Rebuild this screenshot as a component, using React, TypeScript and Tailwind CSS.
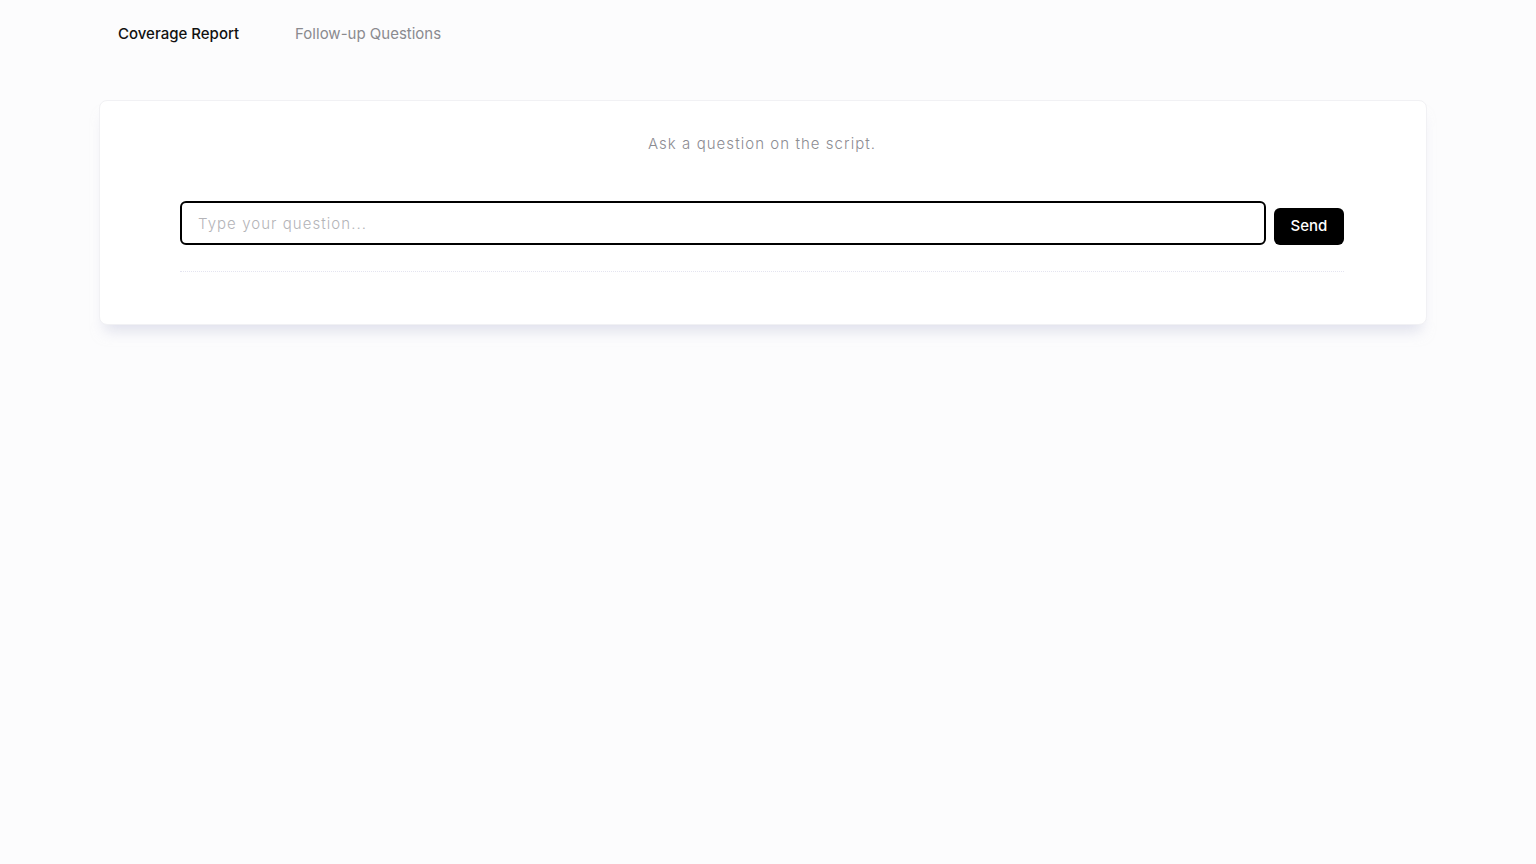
export default function App() {
  return (
    <div
      className="min-h-screen w-full bg-[#fcfcfd] text-black"
      style={{ fontFamily: 'Inter, "Noto Sans", sans-serif' }}
    >
      {/* Tabs */}
      <div className="flex items-center pl-[90px] pt-[23px]">
        <button className="px-7 text-[15px] font-medium text-[#111]">Coverage Report</button>
        <button className="px-7 text-[15px] font-normal text-[#8a8a8f]">Follow-up Questions</button>
      </div>

      {/* Card */}
      <div className="mx-auto mt-[54px] w-[1328px] -translate-x-[5px] rounded-lg border border-[#f1f1f4] bg-white pt-[32px] pr-[82px] pb-[52px] pl-20 shadow-[0_12px_14px_-6px_rgba(200,202,222,0.55)]">
        <p className="text-center text-[15px] font-light tracking-[0.07em] text-[#8c8c92]">
          Ask a question on the script.
        </p>

        <div className="mt-[46px] flex items-end gap-2">
          <input
            type="text"
            placeholder="Type your question..."
            className="h-[44px] flex-1 rounded-md border-2 border-black bg-white px-4 text-[15px] text-black outline-none placeholder:font-light placeholder:tracking-[0.07em] placeholder:text-[#b4b4b8]"
          />
          <button className="h-[37px] w-[70px] rounded-md bg-black text-[15px] font-medium text-white">
            Send
          </button>
        </div>

        <div className="mt-[26px] border-b border-dotted border-[#e4e4f0]" />
      </div>
    </div>
  );
}
